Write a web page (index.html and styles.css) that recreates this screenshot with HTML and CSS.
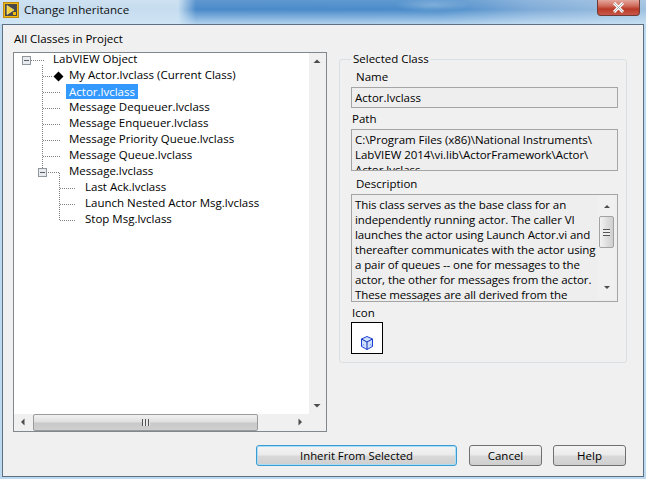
FILE: index.html
```html
<!DOCTYPE html>
<html lang="en">
<head>
<meta charset="utf-8">
<title>Change Inheritance</title>
<link rel="stylesheet" href="styles.css">
</head>
<body>
<div class="window">
  <header class="titlebar">
    <svg class="app-icon" width="16" height="16" viewBox="0 0 16 16"><rect x="0.5" y="0.5" width="15" height="15" fill="#f2b90f" stroke="#c08a10"/><rect x="2" y="2" width="12" height="12" fill="#4a4a4a"/><path d="M4 3.5 L11 8 L4 12.5 Z" fill="#f6d23c" stroke="#fff3a0" stroke-width=".6"/><rect x="10" y="10" width="3" height="3" fill="#f2b90f"/></svg>
    <span class="title">Change Inheritance</span>
    <div class="close"><svg width="13" height="11" viewBox="0 0 13 11"><path d="M2 1 L11 10 M11 1 L2 10" stroke="#fff" stroke-width="3"/><path d="M2 1 L11 10 M11 1 L2 10" stroke="#8a8f96" stroke-width=".7"/></svg></div>
  </header>
  <main class="client">
    <div class="top">
      <section class="left">
        <div class="heading">All Classes in Project</div>
        <div class="listbox">
          <div class="tree">
            <svg class="tree-lines" width="80" height="180" viewBox="0 0 80 180">
              <g fill="none" stroke="#808080" stroke-dasharray="1 1" shape-rendering="crispEdges">
                <path d="M17 7.5H30M28.5 12V119"/>
                <path d="M29 23.5H39M29 39.5H46M29 55.5H46M29 71.5H46M29 87.5H46M29 103.5H46M34 119.5H45.5V167.5M46 135.5H61M46 151.5H61M46 167.5H61"/>
              </g>
              <g shape-rendering="crispEdges">
                <rect x="8.5" y="3.5" width="8" height="8" fill="#e8ecef" stroke="#8e979e"/><path d="M10 7.5H15" stroke="#55606a"/>
                <rect x="24.5" y="115.5" width="8" height="8" fill="#e8ecef" stroke="#8e979e"/><path d="M26 119.5H31" stroke="#55606a"/>
              </g>
              <path d="M44.500 18.500 L49.500 23.500 L44.500 28.500 L39.500 23.500 Z" fill="#000"/>
            </svg>
            <div class="row lv0">LabVIEW Object</div>
            <div class="row lv1">My Actor.lvclass (Current Class)</div>
            <div class="row lv1"><span class="selected">Actor.lvclass</span></div>
            <div class="row lv1">Message Dequeuer.lvclass</div>
            <div class="row lv1">Message Enqueuer.lvclass</div>
            <div class="row lv1">Message Priority Queue.lvclass</div>
            <div class="row lv1">Message Queue.lvclass</div>
            <div class="row lv1">Message.lvclass</div>
            <div class="row lv2">Last Ack.lvclass</div>
            <div class="row lv2">Launch Nested Actor Msg.lvclass</div>
            <div class="row lv2">Stop Msg.lvclass</div>
          </div>
          <div class="vscroll">
            <svg width="16" height="16" viewBox="0 0 16 16"><path d="M4.500 10 H11.500 L8 6.500 Z" fill="#4d4d4d"/></svg>
            <svg width="16" height="16" viewBox="0 0 16 16"><path d="M4.500 6 H11.500 L8 9.500 Z" fill="#4d4d4d"/></svg>
          </div>
          <div class="hscroll">
            <svg width="18" height="16" viewBox="0 0 18 16"><path d="M10.500 4.500 V11.500 L7 8 Z" fill="#4d4d4d"/></svg>
            <div class="hthumb"><span class="grip"></span></div>
            <div class="hspace"></div>
            <svg width="18" height="16" viewBox="0 0 18 16"><path d="M7.500 4.500 V11.500 L11 8 Z" fill="#4d4d4d"/></svg>
          </div>
          <div class="corner"></div>
        </div>
      </section>
      <section class="group">
        <div class="legend">Selected Class</div>
        <div class="label indent name-label">Name</div>
        <div class="field single">Actor.lvclass</div>
        <div class="label path-label">Path</div>
        <div class="field path">C:\Program Files (x86)\National Instruments\<br>LabVIEW 2014\vi.lib\ActorFramework\Actor\<br>Actor.lvclass</div>
        <div class="label indent desc-label">Description</div>
        <div class="field desc">
          <div class="desc-text">This class serves as the base class for an independently running actor. The caller VI launches the actor using Launch Actor.vi and thereafter communicates with the actor using a pair of queues -- one for messages to the actor, the other for messages from the actor. These messages are all derived from the</div>
          <div class="desc-scroll">
            <svg width="16" height="12" viewBox="0 0 16 12"><path d="M5 8 H11 L8 5 Z" fill="#4d4d4d"/></svg>
            <div class="dthumb"><span class="dgrip"></span></div>
            <svg class="down-arrow" width="16" height="12" viewBox="0 0 16 12"><path d="M5 4 H11 L8 7 Z" fill="#4d4d4d"/></svg>
          </div>
        </div>
        <div class="label icon-label">Icon</div>
        <div class="iconbox">
          <svg width="12" height="14" viewBox="0 0 12 14" fill="none" stroke="#1a3fd8"><path d="M6 .5 L11.500 3 V10.500 L6 13.500 L.5 10.500 V3 Z" fill="#cfe0ff"/><path d="M.5 3 L6 6 L11.500 3 M6 6 V13.500" stroke="#0f2bb0"/><path d="M3 8 L1.500 10 M9 8 L10.500 10" stroke="#7f9cf5"/></svg>
        </div>
      </section>
    </div>
    <footer class="buttons">
      <button class="btn default">Inherit From Selected</button>
      <button class="btn cancel">Cancel</button>
      <button class="btn help">Help</button>
    </footer>
  </main>
</div>
</body>
</html>
```
FILE: styles.css
```css
* { box-sizing: border-box; }
html, body { margin: 0; padding: 0; }
body {
  width: 646px;
  height: 479px;
  overflow: hidden;
  font-family: "Open Sans", "Noto Sans", sans-serif;
  font-size: 11.5px;
  color: #000;
  background: #bcd9f0;
}
.window { display: flex; flex-direction: column; height: 479px; padding: 0 2px 2px; }
.titlebar {
  display: flex;
  align-items: flex-start;
  height: 24px;
  margin: 0 -2px;
  padding: 2px 6px 0 3px;
  background:
    radial-gradient(ellipse 38px 7px at 433px 5px, rgba(150,190,225,.65), rgba(150,190,225,0)),
    linear-gradient(180deg, rgba(255,255,255,.12) 0, rgba(255,255,255,0) 40%, rgba(210,232,248,.75) 100%),
    linear-gradient(90deg, #c6ddef 0, #c6ddef 178px, #4a8aca 196px, #4b8cca 440px, #7fabd8 530px, #9fc2e0 646px);
}
.app-icon { flex: none; }
.title { margin-left: 5px; font-size: 11.6px; line-height: 15px; color: #111; }
.close {
  display: flex; align-items: center; justify-content: center;
  width: 43px; height: 16px;
  margin: -2px 0 0 auto;
  border: 1px solid #6f3a36; border-top: 0;
  border-radius: 0 0 4px 4px;
  background: linear-gradient(180deg, #e4a79c 0, #cf6a5a 40%, #b93a28 60%, #c9584a 100%);
}
.client {
  flex: 1;
  display: flex; flex-direction: column;
  border: 1px solid #5b7082;
  background: #f0f0f0;
}
.top { display: flex; align-items: flex-start; height: 406px; }
.left { width: 335px; padding: 6px 0 0 10px; }
.heading { line-height: 16px; height: 21px; padding-left: 1px; }
.listbox {
  display: grid;
  grid-template-columns: 295px 17px;
  grid-template-rows: 361px 17px;
  width: 314px; height: 380px;
  border: 1px solid #82878c;
  background: #fff;
}
.tree { position: relative; background: #fff; }
.tree-lines { position: absolute; left: 0; top: 0; }
.row { display: flow-root; position: relative; height: 16px; line-height: 12px; white-space: nowrap; }
.lv0 { padding-left: 39px; }
.lv1 { padding-left: 55px; }
.lv2 { padding-left: 71px; }
.selected { display: block; width: max-content; margin: -1px 0 0 -3px; padding: 0 3px; height: 15px; line-height: 15px; background: #3399ff; color: #fff; }
.vscroll { display: flex; flex-direction: column; justify-content: space-between; background: #f0f0f0; }
.hscroll { display: flex; align-items: stretch; background: #f0f0f0; }
.hthumb {
  display: flex; align-items: center; justify-content: center;
  width: 225px; margin-left: 1px;
  border: 1px solid #9a9a9a; border-radius: 2px;
  background: linear-gradient(180deg, #f1f1f1 0, #e0e0e0 45%, #c9c9c9 55%, #cfcfcf 100%);
}
.grip { width: 8px; height: 7px; background: repeating-linear-gradient(90deg, #555 0 1px, #e8e8e8 1px 3px); }
.hspace { flex: 1; }
.corner { background: #f0f0f0; }
.group {
  width: 288px;
  height: 304px;
  margin: 34px 0 0 1px;
  padding: 0 8px 0 11px;
  border: 1px solid #d9dfe3;
  border-radius: 3px;
}
.legend { display: table; margin: -9px 0 0 0; padding: 0 2px; line-height: 16px; background: #f0f0f0; }
.label { line-height: 16px; }
.indent { padding-left: 5px; }
.name-label { margin-top: 2px; }
.path-label { margin-top: 3px; padding-left: 1px; }
.desc-label { margin-top: 5px; }
.icon-label { margin-top: 3px; padding-left: 1px; }
.field { width: 267px; border: 1px solid #a5a5a5; background: #eeeeee; padding-left: 3px; line-height: 15px; overflow: hidden; }
.single { height: 21px; margin-top: 2px; line-height: 19px; }
.path { height: 42px; margin-top: 2px; padding-top: 2px; white-space: nowrap; letter-spacing: -0.04px; }
.desc { display: flex; height: 108px; margin-top: 2px; padding-top: 2px; }
.desc-text { width: 243px; flex: none; letter-spacing: -0.1px; }
.desc-scroll {
  display: flex; flex-direction: column; align-items: center;
  width: 17px; height: 104px; flex: none; margin: -2px 0 0 0;
  padding: 5px 0; background: #f0f0f0;
}
.dthumb {
  display: flex; align-items: center; justify-content: center;
  width: 15px; height: 32px; margin-top: 4px;
  border: 1px solid #a2a2a2; border-radius: 2px;
  background: linear-gradient(90deg, #f3f3f3, #dcdcdc 60%, #cfcfcf);
}
.dgrip { width: 7px; height: 7px; background: repeating-linear-gradient(180deg, #555 0 1px, #eee 1px 3px); }
.down-arrow { margin-top: auto; }
.iconbox {
  display: flex; align-items: flex-end; justify-content: center;
  width: 32px; height: 32px; padding-bottom: 3px; margin-top: 1px;
  border: 1px solid #000; background: #fff;
}
.buttons { display: flex; padding: 14px 0 0 253px; }
.btn {
  height: 21px; padding: 0;
  font: inherit; line-height: 17px; color: #000;
  border: 1px solid #707070; border-radius: 3px;
  background: linear-gradient(180deg, #f4f4f4 0, #ebebeb 45%, #d8d8d8 55%, #cfcfcf 100%);
}
.default { width: 201px; border-color: #3c9bd1; box-shadow: inset 0 0 0 1px #a8def6; font-size: 11.3px; }
.cancel { width: 73px; margin-left: 12px; }
.help { width: 73px; margin-left: 11px; }
```
